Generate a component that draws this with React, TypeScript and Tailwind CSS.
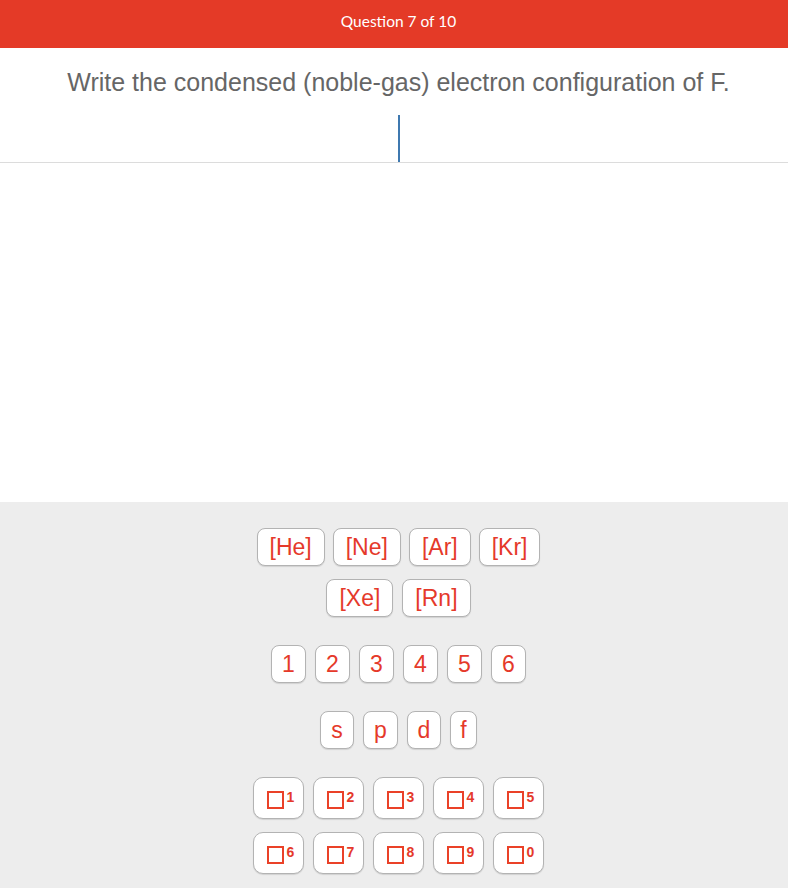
import React from "react";

const red = "text-[#e5392a]";

function Btn({ children, px = "px-[12px]" }: { children: React.ReactNode; px?: string }) {
  return (
    <button
      className={`h-[38px] ${px} rounded-[8px] border border-[#b3b3b3] bg-white shadow-[0_1px_1px_rgba(0,0,0,0.12)] text-[23px] leading-none ${red} flex items-center justify-center`}
      style={{ fontFamily: '"Liberation Sans", Arial, sans-serif' }}
    >
      {children}
    </button>
  );
}

function SupBtn({ n }: { n: string }) {
  return (
    <button className="w-[51px] h-[42px] rounded-[10px] border border-[#b3b3b3] bg-white shadow-[0_1px_1px_rgba(0,0,0,0.12)] flex items-start justify-center pt-[13px] pl-[4px]">
      <span className="w-[17px] h-[18px] border-2 border-[#ea4128] block" />
      <span
        className={`ml-[3px] -mt-[1px] text-[14px] leading-none font-bold ${red}`}
        style={{ fontFamily: '"Liberation Sans", Arial, sans-serif' }}
      >
        {n}
      </span>
    </button>
  );
}

export default function App() {
  return (
    <div className="min-h-screen w-full overflow-hidden flex flex-col bg-white">
      <div className="w-[797px] shrink-0 flex-1 flex flex-col">
        <div
          className="h-[48px] bg-[#e43a27] flex items-start justify-center pt-[11px] text-white text-[15.5px] leading-[20px]"
          style={{ fontFamily: 'Lato, "Open Sans", sans-serif' }}
        >
          Question 7 of 10
        </div>
        <div
          className="pt-[20px] text-center text-[25px] leading-[28px] text-[#666666]"
          style={{ fontFamily: '"Liberation Sans", Arial, sans-serif' }}
        >
          Write the condensed (noble-gas) electron configuration of F.
        </div>
        <div className="h-[48px] mt-[19px] border-b border-[#dcdcdc] flex justify-center">
          <div className="w-[2px] h-[47px] bg-[#3f79b0]" />
        </div>
        <div className="h-[339px]" />
        <div className="flex-1 bg-[#ededed] pt-[26px] flex flex-col items-center">
          <div className="flex gap-[8px]">
            <Btn>[He]</Btn>
            <Btn>[Ne]</Btn>
            <Btn>[Ar]</Btn>
            <Btn>[Kr]</Btn>
          </div>
          <div className="flex gap-[9px] mt-[13px]">
            <Btn>[Xe]</Btn>
            <Btn>[Rn]</Btn>
          </div>
          <div className="flex gap-[9px] mt-[28px]">
            {["1", "2", "3", "4", "5", "6"].map((d) => (
              <Btn key={d} px="w-[35px]">{d}</Btn>
            ))}
          </div>
          <div className="flex gap-[9px] mt-[28px]">
            <Btn px="w-[34px]">s</Btn>
            <Btn px="w-[35px]">p</Btn>
            <Btn px="w-[34px]">d</Btn>
            <Btn px="w-[27px]">f</Btn>
          </div>
          <div className="flex gap-[9px] mt-[28px]">
            {["1", "2", "3", "4", "5"].map((d) => (
              <SupBtn key={d} n={d} />
            ))}
          </div>
          <div className="flex gap-[9px] mt-[13px]">
            {["6", "7", "8", "9", "0"].map((d) => (
              <SupBtn key={d} n={d} />
            ))}
          </div>
        </div>
      </div>
    </div>
  );
}
